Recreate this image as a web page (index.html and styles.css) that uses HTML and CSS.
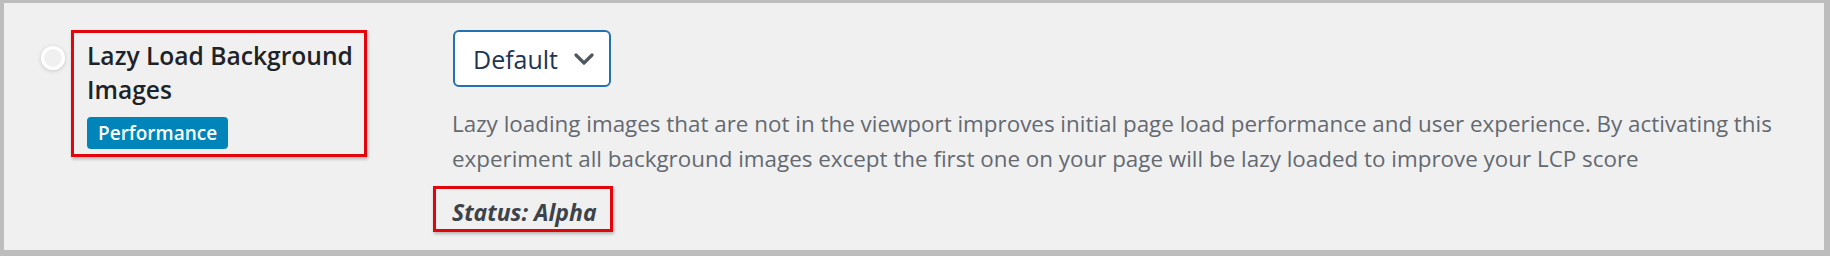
FILE: index.html
```html
<!DOCTYPE html>
<html lang="en">
<head>
    <meta charset="UTF-8">
    <title>Experiments - Lazy Load Background Images</title>
    <link rel="stylesheet" href="styles.css">
</head>
<body>
    <div class="frame">
        <div class="experiment">
            <div class="experiment-head">
                <span class="toggle"></span>
                <div class="title-box">
                    <h3 class="title">Lazy Load Background Images</h3>
                    <span class="tag">Performance</span>
                </div>
            </div>

            <div class="experiment-body">
                <div class="select">
                    <span>Default</span>
                    <svg width="20" height="12" viewBox="0 0 20 12">
                        <path d="M2 2 L10 10 L18 2" fill="none" stroke="#50575e" stroke-width="3.2" stroke-linecap="round" stroke-linejoin="round"/>
                    </svg>
                </div>
                <p class="description">Lazy loading images that are not in the viewport improves initial page load performance and user experience. By activating this experiment all background images except the first one on your page will be lazy loaded to improve your LCP score</p>
                <div class="status"><strong><em>Status: Alpha</em></strong></div>
            </div>
        </div>
    </div>
</body>
</html>
```

FILE: styles.css
```css
body {
    margin: 0;
    padding: 0;
    background-color: #bdbdbd;
    font-family: "Open Sans", "Noto Sans", sans-serif;
}

.frame {
    height: 256px;
    box-sizing: border-box;
    background-color: #f0f0f1;
    border-style: solid;
    border-color: #bdbdbd;
    border-width: 3px 6px 6px 4px;
}

.experiment {
    display: flex;
}

/* left column: toggle + name */
.experiment-head {
    display: flex;
    align-items: flex-start;
    width: 448px;
    padding-top: 27px;
}

.toggle {
    width: 18px;
    height: 18px;
    margin: 16px 0 0 37px;
    border: 3px solid #fff;
    border-radius: 50%;
    box-shadow: 0 1px 4px rgba(0, 0, 0, 0.18);
}

.title-box {
    width: 296px;
    height: 127px;
    margin-left: 6px;
    padding: 6px 0 0 13px;
    box-sizing: border-box;
    border: 3px solid #e2050c;
    box-shadow: 1px 2px 3px rgba(0, 0, 0, 0.25);
}

.title {
    margin: 0;
    font-size: 24.6px;
    line-height: 34px;
    font-weight: 600;
    color: #1d2327;
}

.tag {
    display: inline-block;
    margin-top: 10px;
    padding: 0 11px;
    height: 32px;
    line-height: 32px;
    border-radius: 4px;
    background-color: #0085ba;
    color: #fff;
    font-size: 19px;
    font-weight: 600;
}

/* right column: control + text */
.experiment-body {
    flex: 1;
    padding-top: 27px;
    padding-right: 40px;
}

.select {
    display: inline-flex;
    align-items: center;
    gap: 16px;
    height: 57px;
    padding: 0 15px 0 18px;
    margin-left: 1px;
    box-sizing: border-box;
    border: 2px solid #2271b1;
    border-radius: 6px;
    background-color: #fff;
    color: #1e3553;
    font-size: 25px;
}

.description {
    margin: 19px 0 0;
    font-size: 22.4px;
    line-height: 35px;
    color: #646970;
}

.status {
    display: inline-block;
    margin: 10px 0 0 -19px;
    padding: 8px 13px 1px 16px;
    border: 3px solid #e2050c;
    box-shadow: 1px 2px 3px rgba(0, 0, 0, 0.25);
    font-size: 23px;
    line-height: 31px;
    color: #3c434a;
}
```
